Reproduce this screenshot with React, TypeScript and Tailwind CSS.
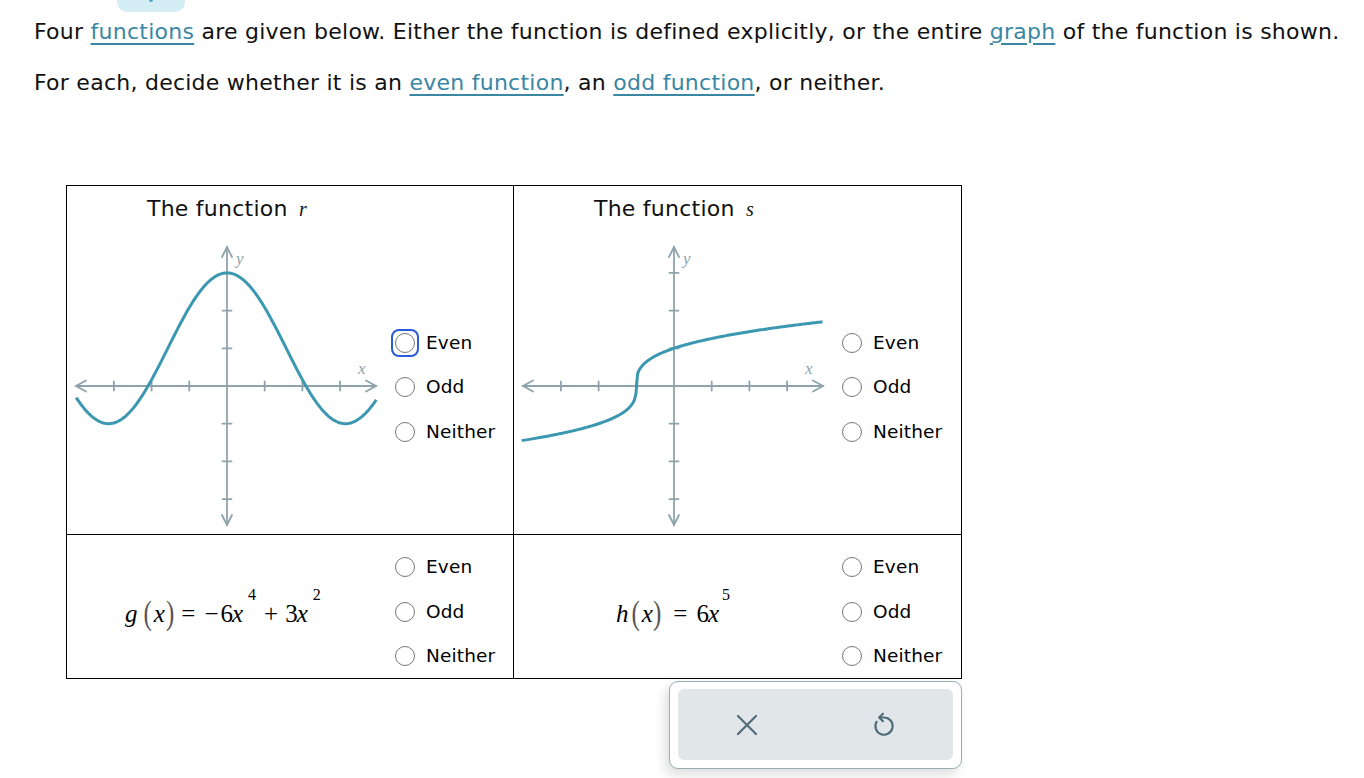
import React from "react";

const U = 37.7;
const OX = 160;
const OY = 146;
const AXIS = "#8fa3ac";
const CURVE = "#3c97b1";

// build an svg path from a function in graph units
function curvePath(f: (x: number) => number, x0: number, x1: number) {
    const pts: string[] = [];
    const n = 200;
    for (let i = 0; i <= n; i++) {
        const x = x0 + ((x1 - x0) * i) / n;
        const px = OX + x * U;
        const py = OY - f(x) * U;
        pts.push(`${i === 0 ? "M" : "L"}${px.toFixed(2)} ${py.toFixed(2)}`);
    }
    return pts.join(" ");
}

function Graph({ f, x0, x1 }: { f: (x: number) => number; x0: number; x1: number }) {
    const ticks = [-3, -2, -1, 1, 2, 3];
    return (
        <svg width={320} height={292} viewBox="0 0 320 292" className="shrink-0">
            <g stroke={AXIS} strokeWidth={1.8} fill="none" strokeLinecap="round">
                <line x1={9} y1={OY} x2={309} y2={OY} />
                <polyline points={`19,${OY - 5.5} 9,${OY} 19,${OY + 5.5}`} />
                <polyline points={`299,${OY - 5.5} 309,${OY} 299,${OY + 5.5}`} />
                <line x1={OX} y1={7} x2={OX} y2={285} />
                <polyline points={`${OX - 5},17 ${OX},7 ${OX + 5},17`} />
                <polyline points={`${OX - 5},275 ${OX},285 ${OX + 5},275`} />
                {ticks.map((t) => (
                    <line key={"x" + t} x1={OX + t * U} y1={OY - 4.5} x2={OX + t * U} y2={OY + 4.5} />
                ))}
                {ticks.map((t) => (
                    <line key={"y" + t} x1={OX - 4.5} y1={OY - t * U} x2={OX + 4.5} y2={OY - t * U} />
                ))}
            </g>
            <text x={OX + 9} y={24} fill={AXIS} fontSize={17} fontStyle="italic" fontFamily="'Liberation Serif', serif">y</text>
            <text x={291} y={134} fill={AXIS} fontSize={17} fontStyle="italic" fontFamily="'Liberation Serif', serif">x</text>
            <path d={curvePath(f, x0, x1)} stroke={CURVE} strokeWidth={3} fill="none" strokeLinecap="butt" />
        </svg>
    );
}

function Radio({ label, focus = false }: { label: string; focus?: boolean }) {
    return (
        <div className="flex items-center h-[44.5px]">
            <span className="relative w-[20px] h-[20px] shrink-0">
                <span className="block w-[20px] h-[20px] rounded-full border-[1.5px] border-[#767676] bg-white" />
                {focus && <span className="absolute -inset-[4px] rounded-[8px] border-[2.5px] border-[#2a5bd6]" />}
            </span>
            <span className="ml-[11px] text-[18.5px] tracking-[0.15px] text-black">{label}</span>
        </div>
    );
}

function Radios({ focus = false }: { focus?: boolean }) {
    return (
        <div className="flex flex-col pl-[8px]">
            <Radio label="Even" focus={focus} />
            <Radio label="Odd" />
            <Radio label="Neither" />
        </div>
    );
}

const serif = "font-['Liberation_Serif',serif]";

function Paren({ c }: { c: string }) {
    return <span className="inline-block text-[25px] leading-none text-[#555] scale-y-[1.35] align-[1px]">{c}</span>;
}

function Sup({ n, ml }: { n: string; ml: string }) {
    return <span className={`text-[16px] align-[22px] ${ml}`}>{n}</span>;
}

export default function App() {
    const link = "text-[#3a87a3] underline underline-offset-[4px] decoration-[1.5px]";
    return (
        <div className="min-h-screen bg-white font-['DejaVu_Sans',sans-serif] text-[#111]">
            <div className="ml-[117px] w-[68px] h-[12px] bg-[#d5edf4] rounded-b-[10px] flex justify-center">
                <span className="w-[4px] h-[2px] bg-[#4aa7c7] rounded-b-full" />
            </div>

            <p className="pl-[34px] mt-[5px] text-[22px] tracking-[0.25px] leading-[30px]">
                Four <span className={link}>functions</span> are given below. Either the function is defined explicitly, or the entire{" "}
                <span className={link}>graph</span> of the function is shown.
            </p>
            <p className="pl-[34px] mt-[21px] text-[22px] tracking-[0.25px] leading-[30px]">
                For each, decide whether it is an <span className={link}>even function</span>, an{" "}
                <span className={link}>odd function</span>, or neither.
            </p>

            <div className="ml-[66px] mt-[87px] w-[896px] border border-black grid grid-cols-[447px_447px]">
                {/* row 1 */}
                <div className="h-[349px] border-r border-b border-black flex flex-col">
                    <div className="w-[320px] h-[54px] pt-[10px] text-center text-[22px] tracking-[0.25px] leading-[26px]">
                        The function <span className={`${serif} italic text-[20px] ml-[4px]`}>r</span>
                    </div>
                    <div className="flex items-center">
                        <Graph f={(x) => 1 + 2 * Math.cos(x)} x0={-4} x1={3.96} />
                        <div className="pt-[2px]">
                            <Radios focus />
                        </div>
                    </div>
                </div>
                <div className="h-[349px] border-b border-black flex flex-col">
                    <div className="w-[320px] h-[54px] pt-[10px] text-center text-[22px] tracking-[0.25px] leading-[26px]">
                        The function <span className={`${serif} italic text-[20px] ml-[4px]`}>s</span>
                    </div>
                    <div className="flex items-center">
                        <Graph f={(x) => Math.cbrt(x + 1)} x0={-4.04} x1={3.94} />
                        <div className="pt-[2px]">
                            <Radios />
                        </div>
                    </div>
                </div>

                {/* row 2 */}
                <div className="h-[143px] border-r border-black flex">
                    <div className="w-[320px] flex items-center">
                        <div className={`pl-[58px] pb-[4px] whitespace-nowrap ${serif} text-[25px] leading-[30px] text-black`}>
                            <span className="italic">g</span>
                            <span className="ml-[6px]"><Paren c="(" /></span>
                            <span className="italic ml-[2px]">x</span>
                            <span className="ml-[1px]"><Paren c=")" /></span>
                            <span className="ml-[7px]">=</span>
                            <span className="ml-[9px]">−</span>
                            <span className="ml-[2px]">6</span>
                            <span className="italic ml-[-1px]">x</span>
                            <Sup n="4" ml="ml-[5px]" />
                            <span className="ml-[8px]">+</span>
                            <span className="ml-[7px]">3</span>
                            <span className="italic ml-[-1px]">x</span>
                            <Sup n="2" ml="ml-[5px]" />
                        </div>
                    </div>
                    <div className="pt-[10px]">
                        <Radios />
                    </div>
                </div>
                <div className="h-[143px] flex">
                    <div className="w-[320px] flex items-center">
                        <div className={`pl-[102px] pb-[4px] whitespace-nowrap ${serif} text-[25px] leading-[30px] text-black`}>
                            <span className="italic">h</span>
                            <span className="ml-[3px]"><Paren c="(" /></span>
                            <span className="italic ml-[2px]">x</span>
                            <span className="ml-[0px]"><Paren c=")" /></span>
                            <span className="ml-[12px]">=</span>
                            <span className="ml-[9px]">6</span>
                            <span className="italic ml-[-1px]">x</span>
                            <Sup n="5" ml="ml-[3px]" />
                        </div>
                    </div>
                    <div className="pt-[10px]">
                        <Radios />
                    </div>
                </div>
            </div>

            <div className="ml-[66px] w-[896px] mt-[2px] flex justify-end">
                <div className="w-[293px] h-[88px] rounded-[9px] border border-[#9aacb5] bg-white px-[8px] pt-[7px] pb-[8px] shadow-[-4px_6px_12px_rgba(0,0,0,0.13)]">
                    <div className="h-full rounded-[6px] bg-[#e1e6e9] flex">
                        <button className="flex-1 flex items-center justify-center">
                            <svg width="22" height="22" viewBox="0 0 22 22">
                                <path d="M2 2 L20 20 M20 2 L2 20" stroke="#4f6c79" strokeWidth="2.2" strokeLinecap="round" />
                            </svg>
                        </button>
                        <button className="flex-1 flex items-center justify-center">
                            <svg width="26" height="28" viewBox="0 0 24 26" fill="none" stroke="#4f6c79" strokeWidth="2" strokeLinecap="round" strokeLinejoin="round">
                                <path d="M8 6 H12 A8 8 0 1 1 5.1 10" />
                                <path d="M11 2.5 L7.5 6 L11 9.5" />
                            </svg>
                        </button>
                    </div>
                </div>
            </div>
        </div>
    );
}
